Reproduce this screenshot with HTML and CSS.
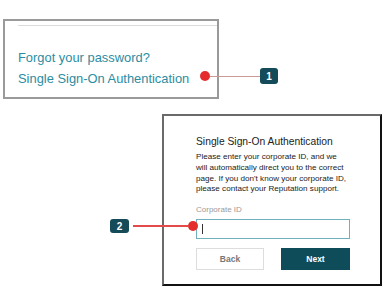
FILE: index.html
```html
<!DOCTYPE html>
<html>
<head>
<meta charset="utf-8">
<link rel="stylesheet" href="styles.css">
</head>
<body>
<div class="page">
  <div class="login-box">
    <div class="rule"></div>
    <a class="link first">Forgot your password?</a>
    <a class="link">Single Sign-On Authentication</a>
  </div>

  <div class="sso-box">
    <div class="sso-title">Single Sign-On Authentication</div>
    <p class="sso-text">Please enter your corporate ID, and we will automatically direct you to the correct page. If you don't know your corporate ID, please contact your Reputation support.</p>
    <div class="field-label">Corporate ID</div>
    <div class="field"><span class="caret"></span></div>
    <div class="actions">
      <button class="btn btn-back">Back</button>
      <button class="btn btn-next">Next</button>
    </div>
  </div>

  <div class="callout callout-1">
    <span class="dot"></span><span class="line"></span><span class="badge">1</span>
  </div>
  <div class="callout callout-2">
    <span class="badge">2</span><span class="line"></span><span class="dot"></span>
  </div>
</div>
</body>
</html>
```
FILE: styles.css
```css
* { box-sizing: border-box; }
html, body { margin: 0; padding: 0; background: #fff; }
body { font-family: "Liberation Sans", Arial, sans-serif; }
.page { position: relative; width: 387px; height: 305px; padding-top: 19px; }

.login-box {
  margin-left: 3px;
  width: 216px;
  height: 80px;
  border: 2px solid #9a9a9a;
  padding: 4px 0 0 13px;
  display: flex;
  flex-direction: column;
}
.rule { height: 1px; background: #dcdcdc; margin-bottom: 21px; }
.link {
  color: #2b8da2;
  font-size: 12.9px;
  line-height: 21px;
  white-space: nowrap;
}

.sso-box {
  margin: 15px 0 0 162px;
  width: 220px;
  height: 172px;
  border: 2px solid #111;
  border-top-color: #6a6a6a;
  border-left-color: #6a6a6a;
  padding: 19px 30px 0 32px;
  display: flex;
  flex-direction: column;
}
.sso-title { font-size: 10.3px; line-height: 13px; color: #222; white-space: nowrap; }
.sso-text {
  margin: 4px 0 0;
  font-size: 8.1px;
  line-height: 10.8px;
  color: #222;
}
.field-label { margin-top: 10px; font-size: 8px; line-height: 10px; color: #9a9a9a; }
.field {
  margin-top: 4px;
  height: 20px;
  border: 1px solid #6fb0bd;
  display: flex;
  align-items: center;
  padding-left: 5px;
}
.caret { width: 1px; height: 10px; background: #333; }
.actions { display: flex; justify-content: space-between; margin-top: 9px; }
.btn {
  width: 68px;
  height: 22px;
  font-family: "Liberation Sans", Arial, sans-serif;
  font-weight: bold;
  font-size: 8.5px;
  padding: 0;
}
.btn-back { background: #fff; border: 1px solid #ddd; color: #777; }
.btn-next { width: 69px; background: #0f4c5a; border: none; color: #fff; }

.callout { position: absolute; display: flex; align-items: center; }
.callout .dot { width: 10px; height: 10px; border-radius: 50%; background: #e52c2c; }
.callout .badge {
  width: 18px; height: 16px; border-radius: 3px;
  background: #154b58; color: #fff;
  font-weight: bold; font-size: 10px;
  display: flex; align-items: center; justify-content: center;
}
.callout-1 { left: 200px; top: 68px; }
.callout-1 .line { width: 50px; height: 1px; background: #c99a96; }
.callout-2 { left: 110px; top: 219px; }
.callout-2 .badge { width: 19px; height: 14px; }
.callout-2 .line { width: 55px; height: 1.5px; background: #e34a4a; margin-left: 4px; }
```
